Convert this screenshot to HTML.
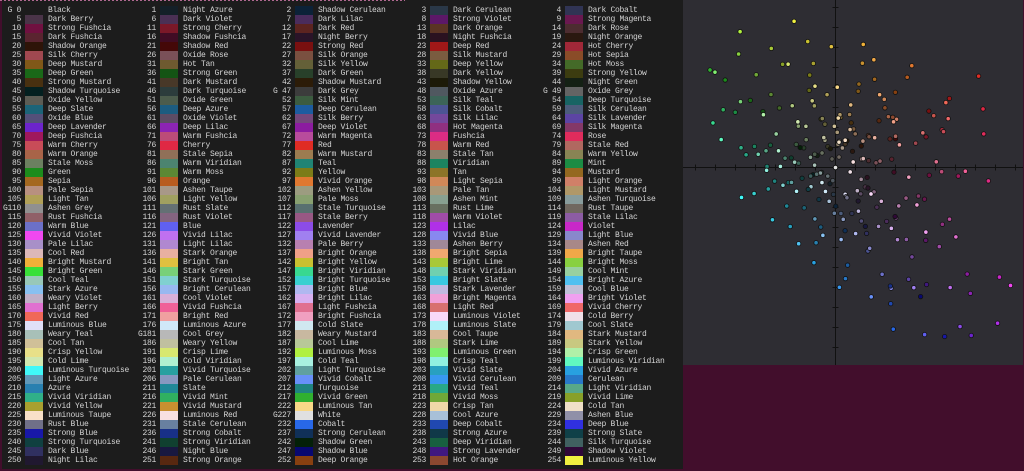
<!DOCTYPE html>
<html><head><meta charset="utf-8"><style>
html,body{margin:0;padding:0;width:1024px;height:471px;overflow:hidden;background:#420e2c;}
#left{position:absolute;left:2px;top:0;width:681px;height:469px;background:#1c1c1c;}
#dash{position:absolute;left:0;top:0;width:405px;height:1px;background:repeating-linear-gradient(90deg,#b06890 0 2px,transparent 2px 4px);}
#grid{position:absolute;left:0;top:6px;display:grid;grid-template-columns:repeat(5,135px);grid-auto-rows:9px;font-family:"Liberation Mono",monospace;font-size:8px;letter-spacing:-0.3px;color:#d4d4d4;line-height:9px;}
#grid div{display:flex;white-space:pre;height:9px;}
#grid s{text-decoration:none;width:21px;text-align:right;flex:none;}
#grid b{width:18px;height:9px;margin-left:4px;margin-right:5px;flex:none;}
#plot{position:absolute;left:683px;top:0;width:340px;height:365px;background:#2e2d33;}
</style></head><body>
<div id="left"></div>
<div id="dash"></div>
<div id="grid">
<div><s>G 0</s><b style="background:#1c1c1c"></b>Black</div>
<div><s>1</s><b style="background:#142028"></b>Night Azure</div>
<div><s>2</s><b style="background:#0c2238"></b>Shadow Cerulean</div>
<div><s>3</s><b style="background:#2a3848"></b>Dark Cerulean</div>
<div><s>4</s><b style="background:#303454"></b>Dark Cobalt</div>
<div><s>5</s><b style="background:#4a3448"></b>Dark Berry</div>
<div><s>6</s><b style="background:#4a3054"></b>Dark Violet</div>
<div><s>7</s><b style="background:#4a2c5c"></b>Dark Lilac</div>
<div><s>8</s><b style="background:#5c1868"></b>Strong Violet</div>
<div><s>9</s><b style="background:#6a1850"></b>Strong Magenta</div>
<div><s>10</s><b style="background:#701040"></b>Strong Fushcia</div>
<div><s>11</s><b style="background:#7a1828"></b>Strong Cherry</div>
<div><s>12</s><b style="background:#5c2420"></b>Dark Red</div>
<div><s>13</s><b style="background:#5a3424"></b>Dark Orange</div>
<div><s>14</s><b style="background:#4c2c30"></b>Dark Rose</div>
<div><s>15</s><b style="background:#5a2430"></b>Dark Fushcia</div>
<div><s>16</s><b style="background:#400c24"></b>Shadow Fushcia</div>
<div><s>17</s><b style="background:#2a1428"></b>Night Berry</div>
<div><s>18</s><b style="background:#2a1220"></b>Night Fushcia</div>
<div><s>19</s><b style="background:#2a1810"></b>Night Orange</div>
<div><s>20</s><b style="background:#2e1408"></b>Shadow Orange</div>
<div><s>21</s><b style="background:#440808"></b>Shadow Red</div>
<div><s>22</s><b style="background:#7a1010"></b>Strong Red</div>
<div><s>23</s><b style="background:#a01818"></b>Deep Red</div>
<div><s>24</s><b style="background:#a02838"></b>Hot Cherry</div>
<div><s>25</s><b style="background:#a04850"></b>Silk Cherry</div>
<div><s>26</s><b style="background:#7a5058"></b>Oxide Rose</div>
<div><s>27</s><b style="background:#7a5040"></b>Silk Orange</div>
<div><s>28</s><b style="background:#7a5c40"></b>Silk Mustard</div>
<div><s>29</s><b style="background:#8a4c28"></b>Hot Sepia</div>
<div><s>30</s><b style="background:#805818"></b>Deep Mustard</div>
<div><s>31</s><b style="background:#6e5a30"></b>Hot Tan</div>
<div><s>32</s><b style="background:#646038"></b>Silk Yellow</div>
<div><s>33</s><b style="background:#646818"></b>Deep Yellow</div>
<div><s>34</s><b style="background:#446a28"></b>Hot Moss</div>
<div><s>35</s><b style="background:#1a6818"></b>Deep Green</div>
<div><s>36</s><b style="background:#145414"></b>Strong Green</div>
<div><s>37</s><b style="background:#28402a"></b>Dark Green</div>
<div><s>38</s><b style="background:#383826"></b>Dark Yellow</div>
<div><s>39</s><b style="background:#3c3c10"></b>Strong Yellow</div>
<div><s>40</s><b style="background:#483010"></b>Strong Mustard</div>
<div><s>41</s><b style="background:#483828"></b>Dark Mustard</div>
<div><s>42</s><b style="background:#2c1c08"></b>Shadow Mustard</div>
<div><s>43</s><b style="background:#1c1a08"></b>Shadow Yellow</div>
<div><s>44</s><b style="background:#142014"></b>Night Green</div>
<div><s>45</s><b style="background:#042020"></b>Shadow Turquoise</div>
<div><s>46</s><b style="background:#2c3c3c"></b>Dark Turquoise</div>
<div><s>G 47</s><b style="background:#3c3c3c"></b>Dark Grey</div>
<div><s>48</s><b style="background:#505860"></b>Oxide Azure</div>
<div><s>G 49</s><b style="background:#646464"></b>Oxide Grey</div>
<div><s>50</s><b style="background:#5c5c54"></b>Oxide Yellow</div>
<div><s>51</s><b style="background:#4c5c4c"></b>Oxide Green</div>
<div><s>52</s><b style="background:#3c5c40"></b>Silk Mint</div>
<div><s>53</s><b style="background:#3c6458"></b>Silk Teal</div>
<div><s>54</s><b style="background:#186464"></b>Deep Turquoise</div>
<div><s>55</s><b style="background:#1c6478"></b>Deep Slate</div>
<div><s>56</s><b style="background:#1c5c80"></b>Deep Azure</div>
<div><s>57</s><b style="background:#1c5ca0"></b>Deep Cerulean</div>
<div><s>58</s><b style="background:#4c5494"></b>Silk Cobalt</div>
<div><s>59</s><b style="background:#4c5c7c"></b>Silk Cerulean</div>
<div><s>60</s><b style="background:#54507a"></b>Oxide Blue</div>
<div><s>61</s><b style="background:#5c4c64"></b>Oxide Violet</div>
<div><s>62</s><b style="background:#74487c"></b>Silk Berry</div>
<div><s>63</s><b style="background:#74489c"></b>Silk Lilac</div>
<div><s>64</s><b style="background:#5c44a4"></b>Silk Lavender</div>
<div><s>65</s><b style="background:#6c24cc"></b>Deep Lavender</div>
<div><s>66</s><b style="background:#8c24b4"></b>Deep Lilac</div>
<div><s>67</s><b style="background:#8c1ca0"></b>Deep Violet</div>
<div><s>68</s><b style="background:#903080"></b>Hot Magenta</div>
<div><s>69</s><b style="background:#843868"></b>Silk Magenta</div>
<div><s>70</s><b style="background:#a0185c"></b>Deep Fushcia</div>
<div><s>71</s><b style="background:#bc4c78"></b>Warm Fushcia</div>
<div><s>72</s><b style="background:#b84c9c"></b>Warm Magenta</div>
<div><s>73</s><b style="background:#dc2c84"></b>Fushcia</div>
<div><s>74</s><b style="background:#e02c5c"></b>Rose</div>
<div><s>75</s><b style="background:#c84c58"></b>Warm Cherry</div>
<div><s>76</s><b style="background:#e02844"></b>Cherry</div>
<div><s>77</s><b style="background:#e02c24"></b>Red</div>
<div><s>78</s><b style="background:#c8544c"></b>Warm Red</div>
<div><s>79</s><b style="background:#b06860"></b>Stale Red</div>
<div><s>80</s><b style="background:#a86448"></b>Warm Orange</div>
<div><s>81</s><b style="background:#907058"></b>Stale Sepia</div>
<div><s>82</s><b style="background:#9c7c50"></b>Warm Mustard</div>
<div><s>83</s><b style="background:#8c806c"></b>Stale Tan</div>
<div><s>84</s><b style="background:#888454"></b>Warm Yellow</div>
<div><s>85</s><b style="background:#6c8060"></b>Stale Moss</div>
<div><s>86</s><b style="background:#4c8470"></b>Warm Viridian</div>
<div><s>87</s><b style="background:#208474"></b>Teal</div>
<div><s>88</s><b style="background:#1c8460"></b>Viridian</div>
<div><s>89</s><b style="background:#1c8c44"></b>Mint</div>
<div><s>90</s><b style="background:#1c8c1c"></b>Green</div>
<div><s>91</s><b style="background:#5c8834"></b>Warm Moss</div>
<div><s>92</s><b style="background:#7c7c18"></b>Yellow</div>
<div><s>93</s><b style="background:#8c7428"></b>Tan</div>
<div><s>94</s><b style="background:#946820"></b>Mustard</div>
<div><s>95</s><b style="background:#a46820"></b>Sepia</div>
<div><s>96</s><b style="background:#b85c20"></b>Orange</div>
<div><s>97</s><b style="background:#e07830"></b>Vivid Orange</div>
<div><s>98</s><b style="background:#d08858"></b>Light Sepia</div>
<div><s>99</s><b style="background:#d08068"></b>Light Orange</div>
<div><s>100</s><b style="background:#b89080"></b>Pale Sepia</div>
<div><s>101</s><b style="background:#a89888"></b>Ashen Taupe</div>
<div><s>102</s><b style="background:#9c9c80"></b>Ashen Yellow</div>
<div><s>103</s><b style="background:#a89878"></b>Pale Tan</div>
<div><s>104</s><b style="background:#b09868"></b>Light Mustard</div>
<div><s>105</s><b style="background:#b0a058"></b>Light Tan</div>
<div><s>106</s><b style="background:#a0a060"></b>Light Yellow</div>
<div><s>107</s><b style="background:#88a070"></b>Pale Moss</div>
<div><s>108</s><b style="background:#88a090"></b>Ashen Mint</div>
<div><s>109</s><b style="background:#889c9c"></b>Ashen Turquoise</div>
<div><s>G110</s><b style="background:#909090"></b>Ashen Grey</div>
<div><s>111</s><b style="background:#647074"></b>Rust Slate</div>
<div><s>112</s><b style="background:#587070"></b>Stale Turquoise</div>
<div><s>113</s><b style="background:#687060"></b>Rust Lime</div>
<div><s>114</s><b style="background:#706860"></b>Rust Taupe</div>
<div><s>115</s><b style="background:#906068"></b>Rust Fushcia</div>
<div><s>116</s><b style="background:#846480"></b>Rust Violet</div>
<div><s>117</s><b style="background:#985884"></b>Stale Berry</div>
<div><s>118</s><b style="background:#a04ca8"></b>Warm Violet</div>
<div><s>119</s><b style="background:#8c5ca4"></b>Stale Lilac</div>
<div><s>120</s><b style="background:#6c70c8"></b>Warm Blue</div>
<div><s>121</s><b style="background:#6060f0"></b>Blue</div>
<div><s>122</s><b style="background:#8c4ce8"></b>Lavender</div>
<div><s>123</s><b style="background:#b030e8"></b>Lilac</div>
<div><s>124</s><b style="background:#c828c8"></b>Violet</div>
<div><s>125</s><b style="background:#f048f0"></b>Vivid Violet</div>
<div><s>126</s><b style="background:#c070f0"></b>Vivid Lilac</div>
<div><s>127</s><b style="background:#a080f0"></b>Vivid Lavender</div>
<div><s>128</s><b style="background:#8888f0"></b>Vivid Blue</div>
<div><s>129</s><b style="background:#8888cc"></b>Light Blue</div>
<div><s>130</s><b style="background:#a890c8"></b>Pale Lilac</div>
<div><s>131</s><b style="background:#b088d0"></b>Light Lilac</div>
<div><s>132</s><b style="background:#b880b0"></b>Pale Berry</div>
<div><s>133</s><b style="background:#a08898"></b>Ashen Berry</div>
<div><s>134</s><b style="background:#a88888"></b>Ashen Red</div>
<div><s>135</s><b style="background:#dcb8b8"></b>Cool Red</div>
<div><s>136</s><b style="background:#e8b0a0"></b>Stark Orange</div>
<div><s>137</s><b style="background:#f0a088"></b>Bright Orange</div>
<div><s>138</s><b style="background:#f0a870"></b>Bright Sepia</div>
<div><s>139</s><b style="background:#f0a848"></b>Bright Taupe</div>
<div><s>140</s><b style="background:#f0b038"></b>Bright Mustard</div>
<div><s>141</s><b style="background:#e0c040"></b>Bright Tan</div>
<div><s>142</s><b style="background:#c8c030"></b>Bright Yellow</div>
<div><s>143</s><b style="background:#a8c838"></b>Bright Lime</div>
<div><s>144</s><b style="background:#88d040"></b>Bright Moss</div>
<div><s>145</s><b style="background:#38e038"></b>Bright Green</div>
<div><s>146</s><b style="background:#78d078"></b>Stark Green</div>
<div><s>147</s><b style="background:#38d890"></b>Bright Viridian</div>
<div><s>148</s><b style="background:#70d0b0"></b>Stark Viridian</div>
<div><s>149</s><b style="background:#98d0a0"></b>Cool Mint</div>
<div><s>150</s><b style="background:#98c8b8"></b>Cool Teal</div>
<div><s>151</s><b style="background:#80d0d0"></b>Stark Turquoise</div>
<div><s>152</s><b style="background:#38d0d0"></b>Bright Turquoise</div>
<div><s>153</s><b style="background:#38c8e0"></b>Bright Slate</div>
<div><s>154</s><b style="background:#50c0f0"></b>Bright Azure</div>
<div><s>155</s><b style="background:#88c0f0"></b>Stark Azure</div>
<div><s>156</s><b style="background:#98b8f0"></b>Bright Cerulean</div>
<div><s>157</s><b style="background:#b0b8f0"></b>Bright Blue</div>
<div><s>158</s><b style="background:#c0b8e0"></b>Stark Lavender</div>
<div><s>159</s><b style="background:#c0c0d8"></b>Cool Blue</div>
<div><s>160</s><b style="background:#c0b0c8"></b>Weary Violet</div>
<div><s>161</s><b style="background:#d8b0d8"></b>Cool Violet</div>
<div><s>162</s><b style="background:#d8b0f0"></b>Bright Lilac</div>
<div><s>163</s><b style="background:#f0a0d8"></b>Bright Magenta</div>
<div><s>164</s><b style="background:#f0a0f0"></b>Bright Violet</div>
<div><s>165</s><b style="background:#e070d0"></b>Light Berry</div>
<div><s>166</s><b style="background:#f06098"></b>Vivid Fushcia</div>
<div><s>167</s><b style="background:#e07090"></b>Light Fushcia</div>
<div><s>168</s><b style="background:#d87070"></b>Light Red</div>
<div><s>169</s><b style="background:#f06868"></b>Vivid Cherry</div>
<div><s>170</s><b style="background:#f06858"></b>Vivid Red</div>
<div><s>171</s><b style="background:#f0a0a0"></b>Bright Red</div>
<div><s>172</s><b style="background:#f0a0c0"></b>Bright Fushcia</div>
<div><s>173</s><b style="background:#f8d8f8"></b>Luminous Violet</div>
<div><s>174</s><b style="background:#f0e0e8"></b>Cold Berry</div>
<div><s>175</s><b style="background:#e0e0f8"></b>Luminous Blue</div>
<div><s>176</s><b style="background:#d0e8f8"></b>Luminous Azure</div>
<div><s>177</s><b style="background:#d0e8f0"></b>Cold Slate</div>
<div><s>178</s><b style="background:#b0f0f8"></b>Luminous Slate</div>
<div><s>179</s><b style="background:#a0c8d0"></b>Cool Slate</div>
<div><s>180</s><b style="background:#a8c0b8"></b>Weary Teal</div>
<div><s>G181</s><b style="background:#b8b8b8"></b>Cool Grey</div>
<div><s>182</s><b style="background:#c8b8a0"></b>Weary Mustard</div>
<div><s>183</s><b style="background:#d8b898"></b>Cool Taupe</div>
<div><s>184</s><b style="background:#e0b880"></b>Stark Mustard</div>
<div><s>185</s><b style="background:#d0c098"></b>Cool Tan</div>
<div><s>186</s><b style="background:#c0c0a0"></b>Weary Yellow</div>
<div><s>187</s><b style="background:#b8c898"></b>Cool Lime</div>
<div><s>188</s><b style="background:#b0c880"></b>Stark Lime</div>
<div><s>189</s><b style="background:#c8c880"></b>Stark Yellow</div>
<div><s>190</s><b style="background:#e8e088"></b>Crisp Yellow</div>
<div><s>191</s><b style="background:#d8e870"></b>Crisp Lime</div>
<div><s>192</s><b style="background:#b0f040"></b>Luminous Moss</div>
<div><s>193</s><b style="background:#80f070"></b>Luminous Green</div>
<div><s>194</s><b style="background:#b0f0a8"></b>Crisp Green</div>
<div><s>195</s><b style="background:#d0e8b0"></b>Cold Lime</div>
<div><s>196</s><b style="background:#b0f0d0"></b>Cold Viridian</div>
<div><s>197</s><b style="background:#a8f0e0"></b>Cold Teal</div>
<div><s>198</s><b style="background:#90f0e0"></b>Crisp Teal</div>
<div><s>199</s><b style="background:#60f8c0"></b>Luminous Viridian</div>
<div><s>200</s><b style="background:#40f8f8"></b>Luminous Turquoise</div>
<div><s>201</s><b style="background:#28a0a0"></b>Vivid Turquoise</div>
<div><s>202</s><b style="background:#60a0a0"></b>Light Turquoise</div>
<div><s>203</s><b style="background:#28a0c0"></b>Vivid Slate</div>
<div><s>204</s><b style="background:#28a0e0"></b>Vivid Azure</div>
<div><s>205</s><b style="background:#6098b8"></b>Light Azure</div>
<div><s>206</s><b style="background:#8898c0"></b>Pale Cerulean</div>
<div><s>207</s><b style="background:#6890f8"></b>Vivid Cobalt</div>
<div><s>208</s><b style="background:#3898f0"></b>Vivid Cerulean</div>
<div><s>209</s><b style="background:#2878c8"></b>Cerulean</div>
<div><s>210</s><b style="background:#2880b0"></b>Azure</div>
<div><s>211</s><b style="background:#208898"></b>Slate</div>
<div><s>212</s><b style="background:#208480"></b>Turquoise</div>
<div><s>213</s><b style="background:#28a888"></b>Vivid Teal</div>
<div><s>214</s><b style="background:#58a888"></b>Light Viridian</div>
<div><s>215</s><b style="background:#30b088"></b>Vivid Viridian</div>
<div><s>216</s><b style="background:#30b060"></b>Vivid Mint</div>
<div><s>217</s><b style="background:#30b030"></b>Vivid Green</div>
<div><s>218</s><b style="background:#70a838"></b>Vivid Moss</div>
<div><s>219</s><b style="background:#88a028"></b>Vivid Lime</div>
<div><s>220</s><b style="background:#a8a030"></b>Vivid Yellow</div>
<div><s>221</s><b style="background:#c89030"></b>Vivid Mustard</div>
<div><s>222</s><b style="background:#f8d888"></b>Luminous Tan</div>
<div><s>223</s><b style="background:#f0d8a8"></b>Crisp Tan</div>
<div><s>224</s><b style="background:#f0e0c8"></b>Cold Tan</div>
<div><s>225</s><b style="background:#f8e0c8"></b>Luminous Taupe</div>
<div><s>226</s><b style="background:#f8e0e0"></b>Luminous Red</div>
<div><s>G227</s><b style="background:#e0e0e0"></b>White</div>
<div><s>228</s><b style="background:#a8c0d8"></b>Cool Azure</div>
<div><s>229</s><b style="background:#9090a8"></b>Ashen Blue</div>
<div><s>230</s><b style="background:#707088"></b>Rust Blue</div>
<div><s>231</s><b style="background:#6880a0"></b>Stale Cerulean</div>
<div><s>232</s><b style="background:#2868e8"></b>Cobalt</div>
<div><s>233</s><b style="background:#2048b0"></b>Deep Cobalt</div>
<div><s>234</s><b style="background:#3030e0"></b>Deep Blue</div>
<div><s>235</s><b style="background:#1818a8"></b>Strong Blue</div>
<div><s>236</s><b style="background:#183088"></b>Strong Cobalt</div>
<div><s>237</s><b style="background:#103058"></b>Strong Cerulean</div>
<div><s>238</s><b style="background:#103848"></b>Strong Azure</div>
<div><s>239</s><b style="background:#104048"></b>Strong Slate</div>
<div><s>240</s><b style="background:#104040"></b>Strong Turquoise</div>
<div><s>241</s><b style="background:#104030"></b>Strong Viridian</div>
<div><s>242</s><b style="background:#042008"></b>Shadow Green</div>
<div><s>243</s><b style="background:#186040"></b>Deep Viridian</div>
<div><s>244</s><b style="background:#406060"></b>Silk Turquoise</div>
<div><s>245</s><b style="background:#303060"></b>Dark Blue</div>
<div><s>246</s><b style="background:#181840"></b>Night Blue</div>
<div><s>247</s><b style="background:#080870"></b>Shadow Blue</div>
<div><s>248</s><b style="background:#401880"></b>Strong Lavender</div>
<div><s>249</s><b style="background:#300838"></b>Shadow Violet</div>
<div><s>250</s><b style="background:#201830"></b>Night Lilac</div>
<div><s>251</s><b style="background:#582810"></b>Strong Orange</div>
<div><s>252</s><b style="background:#884010"></b>Deep Orange</div>
<div><s>253</s><b style="background:#8c4830"></b>Hot Orange</div>
<div><s>254</s><b style="background:#f0f040"></b>Luminous Yellow</div>
</div>
<div id="plot"><svg id="sv" width="340" height="365" xmlns="http://www.w3.org/2000/svg">
<g id="axes" stroke="#111" stroke-width="1"></g><g id="dots"></g></svg></div>
<script>
(function(){
var cx=152.5,cy=167.5,ax=document.getElementById('axes'),dt=document.getElementById('dots'),NS='http://www.w3.org/2000/svg';
function el(p,t,a){var e=document.createElementNS(NS,t);for(var k in a)e.setAttribute(k,a[k]);p.appendChild(e);return e;}
el(ax,'line',{x1:0,y1:cy,x2:340,y2:cy});el(ax,'line',{x1:cx,y1:0,x2:cx,y2:365});
for(var i=-7;i<=9;i++){var x=cx+i*20;el(ax,'line',{x1:x,y1:cy-3,x2:x,y2:cy+3});}
for(var j=-8;j<=10;j++){var y=cy+j*20;el(ax,'line',{x1:cx-3,y1:y,x2:cx+3,y2:y});}
function lin(c){c/=255;return c<=0.04045?c/12.92:Math.pow((c+0.055)/1.055,2.4);}
function f(t){return t>0.008856?Math.cbrt(t):7.787*t+16/116;}
var bs=document.querySelectorAll('#grid b');
for(var k=0;k<bs.length;k++){var h=bs[k].getAttribute('style').slice(-6);
var r=lin(parseInt(h.substr(0,2),16)),g=lin(parseInt(h.substr(2,2),16)),b=lin(parseInt(h.substr(4,2),16));
var X=(r*0.4124+g*0.3576+b*0.1805)/0.95047,Y=r*0.2126+g*0.7152+b*0.0722,Z=(r*0.0193+g*0.1192+b*0.9505)/1.08883;
var A=500*(f(X)-f(Y)),B=200*(f(Y)-f(Z));
var px=cx+A*2.15,py=cy-B*(B>0?1.85:2.3);if(px<3||px>337||py<3||py>362)continue;
el(dt,'circle',{cx:px,cy:py,r:2.2,fill:'#'+h,stroke:'#111',"stroke-width":0.8});}
})();
</script>
</body></html>
